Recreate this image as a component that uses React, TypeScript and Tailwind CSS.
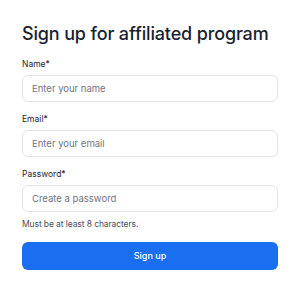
import React from 'react';

const Field = ({ label, placeholder, type = 'text' }: { label: string; placeholder: string; type?: string }) => (
  <div className="flex flex-col">
    <label className="text-[8.5px] text-[#1f2433] leading-[10px] mb-[6px]">{label}</label>
    <input
      type={type}
      placeholder={placeholder}
      className="h-[27px] w-full rounded-[6px] border border-[#e3e4ea] bg-white px-[9px] text-[9.5px] text-[#1f2433] placeholder:text-[#6f7482] outline-none"
    />
  </div>
);

export default function App() {
  return (
    <div className="w-[300px] h-[291px] bg-white px-[22px] pt-[23px] font-['Inter',sans-serif]">
      <h1 className="text-[18px] font-medium text-[#1a1f2e] leading-[22px] tracking-[-0.15px]">
        Sign up for affiliated program
      </h1>
      <div className="mt-[14px] flex flex-col gap-[12px]">
        <Field label="Name*" placeholder="Enter your name" />
        <Field label="Email*" placeholder="Enter your email" type="email" />
        <div className="flex flex-col">
          <Field label="Password*" placeholder="Create a password" type="password" />
          <p className="mt-[7px] text-[8.5px] text-[#4a4f5c] leading-[10px] tracking-[-0.1px]">Must be at least 8 characters.</p>
        </div>
      </div>
      <button className="mt-[13px] h-[28px] w-full rounded-[6px] bg-[#1a6ff0] text-[9px] font-medium text-white">
        Sign up
      </button>
    </div>
  );
}
